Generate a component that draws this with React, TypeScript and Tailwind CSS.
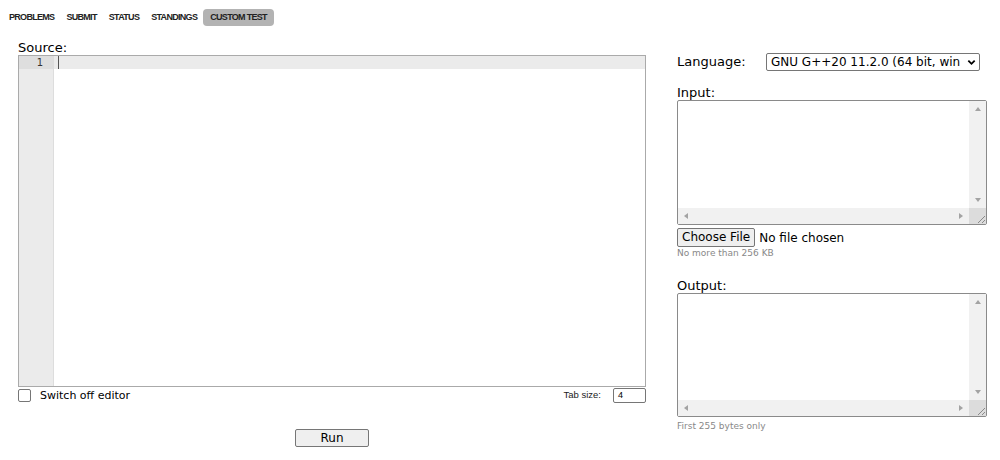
import React from "react";

const V = { fontFamily: '"DejaVu Sans", Verdana, sans-serif' };
const NAV = { fontFamily: '"Liberation Sans", Arial, sans-serif' };
const ARIAL = { fontFamily: '"Liberation Sans", Arial, sans-serif' };

function Tri({ dir }: { dir: "up" | "down" | "left" | "right" }) {
  const pts: Record<string, string> = {
    up: "4,2 7,6 1,6",
    down: "1,2 7,2 4,6",
    left: "6,1 6,7 2,4",
    right: "2,1 2,7 6,4",
  };
  return (
    <svg width="8" height="8" viewBox="0 0 8 8">
      <polygon points={pts[dir]} fill="#a3a3a3" />
    </svg>
  );
}

function FakeTextarea({ h }: { h: string }) {
  return (
    <div className={`flex flex-col border border-[#8a8a8a] rounded-[2px] bg-white ${h}`}>
      <div className="flex flex-1 min-h-0">
        <div className="flex-1" />
        <div className="w-[17px] bg-[#f1f1f1] flex flex-col items-center justify-between py-[4px]">
          <Tri dir="up" />
          <Tri dir="down" />
        </div>
      </div>
      <div className="flex h-[16px]">
        <div className="flex-1 bg-[#f1f1f1] flex items-center justify-between px-[4px]">
          <Tri dir="left" />
          <Tri dir="right" />
        </div>
        <div className="w-[17px] bg-[#dcdcdc] flex items-end justify-end">
          <svg width="10" height="10" viewBox="0 0 10 10">
            <line x1="9" y1="2" x2="2" y2="9" stroke="#8a8a8a" strokeWidth="1" />
            <line x1="9" y1="6" x2="6" y2="9" stroke="#8a8a8a" strokeWidth="1" />
          </svg>
        </div>
      </div>
    </div>
  );
}

export default function App() {
  const items = ["PROBLEMS", "SUBMIT", "STATUS", "STANDINGS"];
  return (
    <div className="w-[1000px] h-[460px] bg-white text-black overflow-hidden" style={V}>
      <nav className="flex pl-[3px] pt-[9px] h-[40px] items-start" style={NAV}>
        {items.map((t) => (
          <div key={t} className="px-[6px] h-[17px] leading-[17px] text-[9px] font-bold text-[#222] tracking-[-0.7px]">
            {t}
          </div>
        ))}
        <div className="px-[7px] h-[17px] leading-[17px] text-[9px] font-bold text-[#222] bg-[#b3b3b3] rounded-[4px] tracking-[-0.7px]">
          CUSTOM TEST
        </div>
      </nav>

      <div className="flex pl-[18px]">
        {/* left column */}
        <div className="w-[628px] flex flex-col">
          <div className="text-[13px] leading-[15px] h-[15px]">Source:</div>
          <div className="h-[332px] border border-[#aaaaaa] flex bg-white">
            <div className="w-[35px] bg-[#ebebeb] border-r border-[#dddddd] flex flex-col">
              <div className="h-[13px] bg-[#dedede] text-[10px] leading-[13px] text-right pr-[10px] text-[#333]">1</div>
            </div>
            <div className="flex-1 flex flex-col">
              <div className="h-[13px] bg-[#ebebeb] pl-[4px] flex">
                <div className="w-px h-[13px] bg-[#555]" />
              </div>
            </div>
          </div>
          <div className="flex items-start justify-between h-[16px]">
            <label className="flex items-center">
              <span className="w-[13px] h-[13px] border border-[#767676] rounded-[2px] bg-white mt-[1px]" />
              <span className="ml-[9px] text-[11px] leading-[15px] mt-[1px]">Switch off editor</span>
            </label>
            <div className="flex items-center mt-[1px]">
              <span className="text-[9.5px] text-[#222] mr-[12px]" style={ARIAL}>Tab size:</span>
              <div className="w-[33px] h-[15px] border border-[#767676] rounded-[2px] text-[9px] leading-[13px] pl-[4px]" style={ARIAL}>4</div>
            </div>
          </div>
          <div className="flex justify-center mt-[26px]">
            <button className="w-[74px] h-[18px] bg-[#efefef] border border-[#767676] rounded-[2px] text-[12px] leading-[16px]">
              Run
            </button>
          </div>
        </div>

        {/* right column */}
        <div className="ml-[31px] w-[310px] flex flex-col">
          <div className="flex items-center mt-[13px] h-[18px]">
            <span className="text-[13px] w-[89px]">Language:</span>
            <div className="w-[214px] h-[18px] border border-[#767676] rounded-[2px] flex items-center pl-[4px] pr-[3px] overflow-hidden">
              <span className="flex-1 whitespace-nowrap overflow-hidden text-[12px] leading-[16px]">GNU G++20 11.2.0 (64 bit, win</span>
              <svg width="9" height="9" viewBox="0 0 10 10" className="ml-[2px] shrink-0">
                <polyline points="1.5,3 5,6.5 8.5,3" fill="none" stroke="#000" strokeWidth="2" />
              </svg>
            </div>
          </div>
          <div className="mt-[15px] text-[13px] leading-[14px]">Input:</div>
          <FakeTextarea h="h-[125px]" />
          <div className="flex items-center mt-[3px] h-[19px]">
            <button className="h-[19px] px-[4px] bg-[#efefef] border border-[#767676] rounded-[2px] text-[12px] leading-[17px]">
              Choose File
            </button>
            <span className="ml-[4px] text-[12px]">No file chosen</span>
          </div>
          <div className="text-[9px] text-[#888] leading-[12px]">No more than 256 KB</div>
          <div className="mt-[19px] text-[13px] leading-[15px]">Output:</div>
          <FakeTextarea h="h-[124px]" />
          <div className="mt-[3px] text-[9px] text-[#888] leading-[12px]">First 255 bytes only</div>
        </div>
      </div>
    </div>
  );
}
